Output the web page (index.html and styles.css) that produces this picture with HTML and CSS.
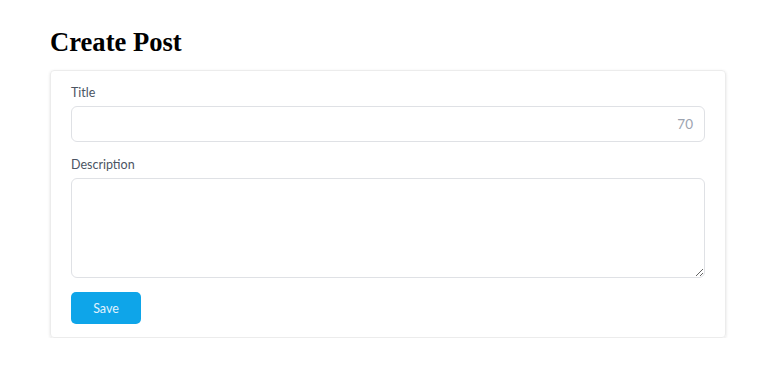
FILE: index.html
```html
<!DOCTYPE html>
<html>
<head>
<meta charset="utf-8">
<link rel="stylesheet" href="styles.css">
</head>
<body>
<div class="page">
  <h1 class="heading">Create Post</h1>
  <form class="card">
    <div class="field">
      <label class="label">Title</label>
      <div class="input-wrap">
        <input class="input" type="text">
        <span class="counter">70</span>
      </div>
    </div>
    <div class="field">
      <label class="label">Description</label>
      <textarea class="textarea"></textarea>
    </div>
    <div class="actions">
      <button type="button" class="btn">Save</button>
    </div>
  </form>
</div>
</body>
</html>
```

FILE: styles.css
```css
html, body {
  margin: 0;
  padding: 0;
  background: #ffffff;
}
.page {
  padding: 26px 42px 0 50px;
  display: flex;
  flex-direction: column;
}
.heading {
  margin: 0 0 12px 0;
  font-family: "Liberation Serif", serif;
  font-weight: bold;
  font-size: 26.6px;
  line-height: 32px;
  color: #000;
}
.card {
  border: 1px solid #ececec;
  border-radius: 4px;
  box-shadow: 0 1px 3px rgba(0,0,0,0.12);
  padding: 14px 20px 13px 20px;
  display: flex;
  flex-direction: column;
  gap: 14px;
  font-family: "Lato", "Noto Sans", sans-serif;
}
.field {
  display: flex;
  flex-direction: column;
  gap: 5px;
}
.field + .field {
  margin-top: 1px;
}
.label {
  font-size: 12.5px;
  line-height: 16px;
  color: #4b5563;
}
.input-wrap {
  position: relative;
}
.input {
  box-sizing: border-box;
  width: 100%;
  height: 36px;
  border: 1px solid #dfe1e5;
  border-radius: 6px;
  padding: 0 40px 0 12px;
  font-family: inherit;
  font-size: 13px;
  outline: none;
  display: block;
}
.counter {
  position: absolute;
  right: 12px;
  top: 0;
  line-height: 36px;
  font-size: 13.5px;
  color: #9ca3af;
}
.textarea {
  box-sizing: border-box;
  width: 100%;
  height: 100px;
  border: 1px solid #dfe1e5;
  border-radius: 6px;
  padding: 8px 12px;
  font-family: inherit;
  font-size: 13px;
  outline: none;
  display: block;
  margin: 0;
}
.actions {
  display: flex;
}
.btn {
  width: 70px;
  height: 32px;
  border: none;
  border-radius: 5px;
  background: #0ea5e9;
  color: #e0f2fe;
  font-family: inherit;
  font-size: 12.5px;
  cursor: pointer;
}
```
